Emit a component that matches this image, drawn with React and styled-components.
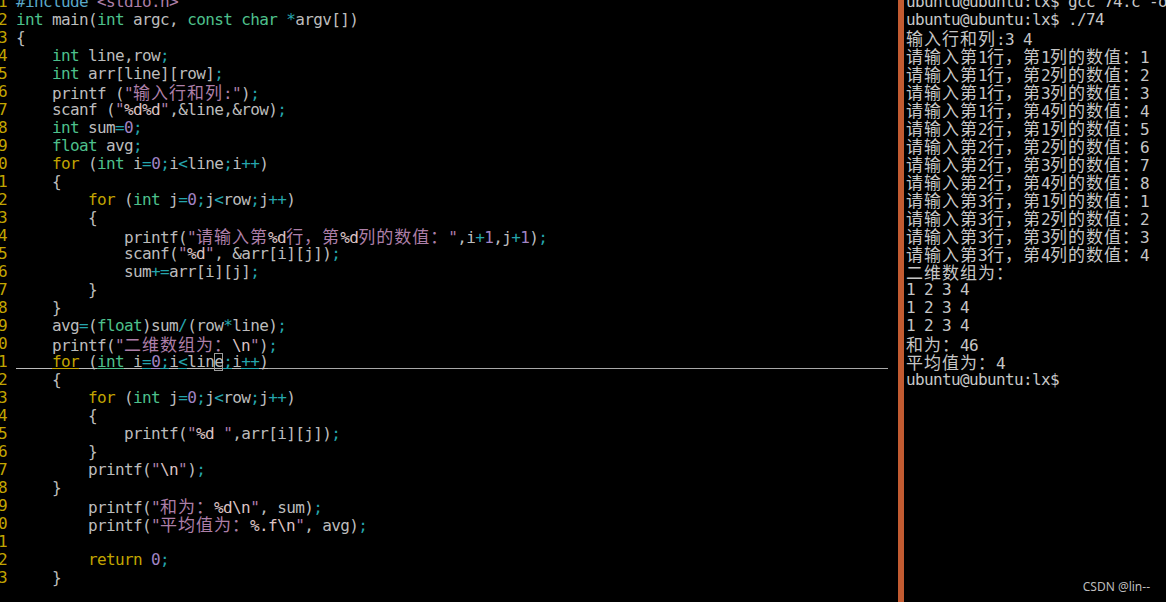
import React from "react";
import styled, { createGlobalStyle, css } from "styled-components";

const GlobalStyle = createGlobalStyle`
  html, body {
    margin: 0;
    padding: 0;
    background: #000;
  }
`;

// vim colours, roughly what the terminal palette shows
const COLORS = {
  plain: "#bcbcbc",
  type: "#4ec08c",
  stmt: "#c2a500",
  pre: "#5aa8c8",
  str: "#ad7fa8",
  num: "#a184c4",
  op: "#25a5ad",
  spec: "#dcc3c3",
};

const CODE = [
  "#include <stdio.h>",
  "int main(int argc, const char *argv[])",
  "{",
  "    int line,row;",
  "    int arr[line][row];",
  '    printf ("输入行和列:");',
  '    scanf ("%d%d",&line,&row);',
  "    int sum=0;",
  "    float avg;",
  "    for (int i=0;i<line;i++)",
  "    {",
  "        for (int j=0;j<row;j++)",
  "        {",
  '            printf("请输入第%d行，第%d列的数值：",i+1,j+1);',
  '            scanf("%d", &arr[i][j]);',
  "            sum+=arr[i][j];",
  "        }",
  "    }",
  "    avg=(float)sum/(row*line);",
  '    printf("二维数组为：\\n");',
  "    for (int i=0;i<line;i++)",
  "    {",
  "        for (int j=0;j<row;j++)",
  "        {",
  '            printf("%d ",arr[i][j]);',
  "        }",
  '        printf("\\n");',
  "    }",
  '        printf("和为：%d\\n", sum);',
  '        printf("平均值为：%.f\\n", avg);',
  "",
  "        return 0;",
  "    }",
];

const CURSOR = { line: 20, col: 22 };

const values = [1, 2, 3, 4, 5, 6, 7, 8, 1, 2, 3, 4];
const TERM = [
  "ubuntu@ubuntu:lx$ gcc 74.c -o 74",
  "ubuntu@ubuntu:lx$ ./74",
  "输入行和列:3 4",
  ...values.map(
    (v, i) => `请输入第${Math.floor(i / 4) + 1}行，第${(i % 4) + 1}列的数值：${v}`
  ),
  "二维数组为：",
  "1 2 3 4 ",
  "1 2 3 4 ",
  "1 2 3 4 ",
  "和为：46",
  "平均值为：4",
  "ubuntu@ubuntu:lx$ ",
];

const TYPES = ["int", "float", "const", "char"];
const STMTS = ["for", "return"];
const TOKEN = /(#include)|(<stdio\.h>)|("(?:[^"\\]|\\.)*")|([A-Za-z_]\w*)|(\d+)|(\+\+|\+=|[=;<+*/])|(\s+|.)/g;

function tokenize(src) {
  const out = [];
  for (const m of src.matchAll(TOKEN)) {
    const [t, pre, inc, str, word, num, op] = m;
    if (pre) out.push(["pre", t]);
    else if (inc) out.push(["str", t]);
    else if (str)
      t.split(/(%\.?[a-z]|\\n)/).forEach((s, i) => s && out.push([i % 2 ? "spec" : "str", s]));
    else if (word) out.push([TYPES.includes(t) ? "type" : STMTS.includes(t) ? "stmt" : "plain", t]);
    else if (num) out.push(["num", t]);
    else if (op) out.push(["op", t]);
    else out.push(["plain", t]);
  }
  return out;
}

function withCursor(tokens, col) {
  const out = [];
  let at = 0;
  tokens.forEach(([kind, text]) => {
    const k = col - at;
    if (k >= 0 && k < text.length) {
      if (k) out.push([kind, text.slice(0, k)]);
      out.push([kind, text[k], true]);
      if (k + 1 < text.length) out.push([kind, text.slice(k + 1)]);
    } else out.push([kind, text]);
    at += text.length;
  });
  return out;
}

const CJK = /([\u3000-\u303f\u4e00-\u9fff\uff00-\uffef]+)/;
const wide = (text) =>
  text.split(CJK).map((part, i) => (i % 2 ? <Wide key={i}>{part}</Wide> : part));

const Screen = styled.div`
  position: relative;
  display: flex;
  width: 1166px;
  height: 602px;
  overflow: hidden;
  background: #000;
  font-family: "DejaVu Sans Mono", "Noto Sans CJK SC", monospace;
  font-size: 16px;
  letter-spacing: -0.63px;
  line-height: 18px;
  white-space: pre;
`;

const Editor = styled.div`
  width: 898px;
  flex-shrink: 0;
  padding-right: 10px;
  box-sizing: border-box;
  overflow: hidden;
`;

const Lines = styled.div`
  margin-top: -7px;
`;

const Row = styled.div`
  display: flex;
  height: 18px;
`;

const Num = styled.span`
  width: 18px;
  margin-left: -2px;
  flex-shrink: 0;
  color: ${COLORS.stmt};
`;

const Code = styled.span`
  flex: 1;
  ${(p) =>
    p.$cursorLine &&
    css`
      background: linear-gradient(#a8a8a8, #a8a8a8) 0 15px / 100% 1px no-repeat;
    `}
`;

const Tok = styled.span`
  color: ${(p) => COLORS[p.$kind]};
  ${(p) =>
    p.$under &&
    css`
      display: inline-block;
      height: 18px;
      vertical-align: top;
      background: linear-gradient(currentColor, currentColor) 0 15px / 100% 1px no-repeat;
    `}
  ${(p) =>
    p.$cursor &&
    css`
      box-shadow: inset 0 0 0 1px #9c9c9c;
    `}
`;

const Wide = styled.span`
  font-family: "Noto Sans CJK SC", sans-serif;
  font-size: 17px;
  letter-spacing: 1px;
`;

const Divider = styled.div`
  width: 6px;
  flex-shrink: 0;
  background: #c25b31;
`;

const Term = styled.div`
  flex: 1;
  overflow: hidden;
  padding-left: 2px;
  color: #c6c6c6;
`;

const TermLine = styled.div`
  height: 18px;
`;

const Mark = styled.div`
  position: absolute;
  right: 16px;
  bottom: 7px;
  font-family: "Noto Sans", sans-serif;
  font-size: 12px;
  letter-spacing: 0;
  line-height: 16px;
  color: #bdbdbd;
`;

const CodeRow = ({ n, src }) => {
  const isCursor = n === CURSOR.line;
  let tokens = tokenize(src);
  if (isCursor) tokens = withCursor(tokens, CURSOR.col);
  return (
    <Row>
      <Num>{(n + 1) % 10}</Num>
      <Code $cursorLine={isCursor}>
        {tokens.map(([kind, text, cur], i) => (
          <Tok key={i} $kind={kind} $under={isCursor} $cursor={cur}>
            {wide(text)}
          </Tok>
        ))}
      </Code>
    </Row>
  );
};

export default function App() {
  return (
    <>
      <GlobalStyle />
      <Screen>
        <Editor>
          <Lines>
            {CODE.map((src, n) => (
              <CodeRow key={n} n={n} src={src} />
            ))}
          </Lines>
        </Editor>
        <Divider />
        <Term>
          <Lines>
            {TERM.map((line, i) => (
              <TermLine key={i}>{wide(line)}</TermLine>
            ))}
          </Lines>
        </Term>
        <Mark>CSDN @lin--</Mark>
      </Screen>
    </>
  );
}
